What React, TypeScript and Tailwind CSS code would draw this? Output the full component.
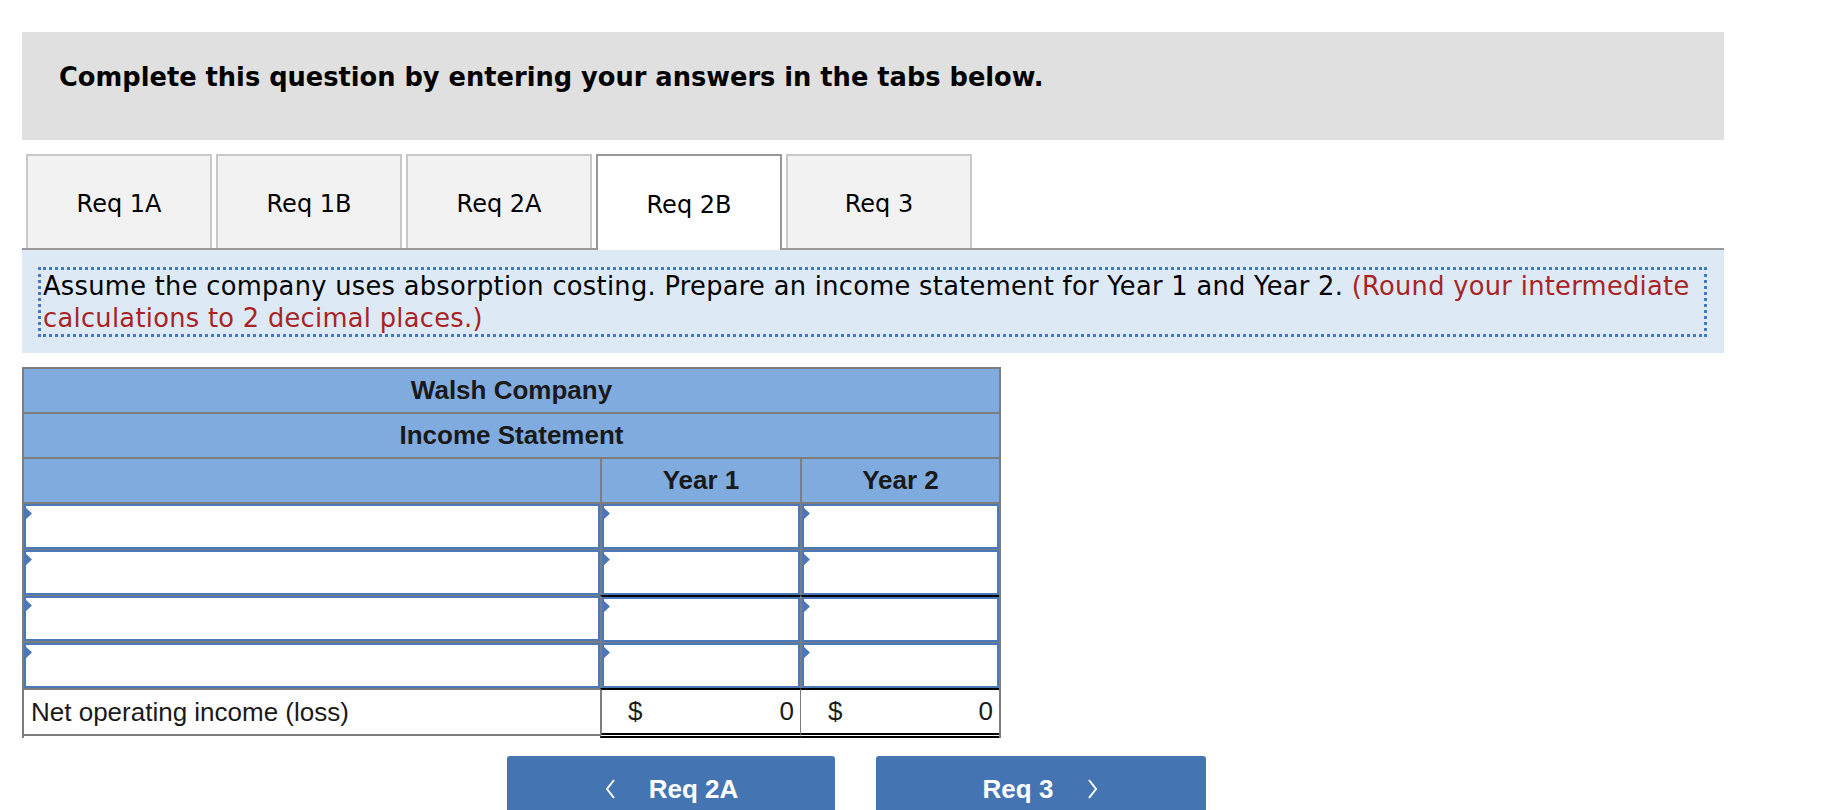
import React from "react"

const tabs = ["Req 1A", "Req 1B", "Req 2A", "Req 2B", "Req 3"]

function Marker() {
    return (
        <svg className="absolute -left-[2px] top-0" width="8" height="15" viewBox="0 0 8 15">
            <polygon points="0,0 8,7.5 0,15" fill="#4a78b8" />
        </svg>
    )
}

function InputCell({ topBlack, first, divider }: { topBlack?: boolean; first?: boolean; divider?: boolean }) {
    return (
        <div
            className={[
                divider ? "border-l-2 border-l-[#7d7d7d]" : "",
                first ? "" : topBlack ? "border-t-2 border-t-black" : "border-t border-t-[#7d7d7d]",
            ].join(" ")}
        >
            <div className="relative h-[45px] border-2 border-[#4a78b8] bg-white">
                <Marker />
            </div>
        </div>
    )
}

function ChevronLeft() {
    return (
        <svg width="12" height="22" viewBox="0 0 12 22" fill="none">
            <path d="M10 2 L3 11 L10 20" stroke="white" strokeWidth="2" />
        </svg>
    )
}

function ChevronRight() {
    return (
        <svg width="12" height="22" viewBox="0 0 12 22" fill="none">
            <path d="M2 2 L9 11 L2 20" stroke="white" strokeWidth="2" />
        </svg>
    )
}

export default function App() {
    const rows = [0, 1, 2, 3]
    return (
        <div className="min-h-[810px] bg-white pt-[32px]">
            <div className="ml-[22px] w-[1702px]">
                {/* heading */}
                <div className="h-[108px] bg-[#e0e0e0] pl-[37px] pt-[31px]">
                    <h2 className="font-['DejaVu_Sans',Verdana,sans-serif] text-[25.7px] font-bold leading-[28px] text-black">
                        Complete this question by entering your answers in the tabs below.
                    </h2>
                </div>

                {/* tabs */}
                <div className="mt-[14px] flex gap-[4px] border-b-2 border-[#999] pl-[4px] font-['DejaVu_Sans',Verdana,sans-serif] text-[24px] text-black">
                    {tabs.map(t => {
                        const active = t === "Req 2B"
                        return (
                            <div
                                key={t}
                                className={
                                    active
                                        ? "-mb-[2px] flex h-[96px] w-[186px] items-center justify-center border-2 border-b-0 border-[#999] bg-white"
                                        : "flex h-[94px] w-[186px] items-center justify-center border-2 border-b-0 border-[#c8c8c8] bg-[#f2f2f2]"
                                }
                            >
                                <span className="pt-[4px]">{t}</span>
                            </div>
                        )
                    })}
                </div>

                {/* instructions */}
                <div className="bg-[#dee9f6] pb-[16px] pl-[16px] pr-[17px] pt-[17px]">
                    <p className="border-[3px] border-dotted border-[#4677c2] pl-[2px] font-['DejaVu_Sans',Verdana,sans-serif] text-[25.7px] leading-[32px] tracking-[0.3px] text-black">
                        Assume the company uses absorption costing. Prepare an income statement for Year 1 and Year 2.{" "}
                        <span className="text-[#a82424]">(Round your intermediate calculations to 2 decimal places.)</span>
                    </p>
                </div>

                {/* statement table */}
                <div className="mt-[14px] w-[979px] border-2 border-b-0 border-[#7d7d7d] font-['Liberation_Sans',Arial,sans-serif] text-[26px] text-[#1a1a1a]">
                    <div className="flex h-[45px] items-center justify-center border-b-2 border-[#7d7d7d] bg-[#80abdf] font-bold">
                        Walsh Company
                    </div>
                    <div className="flex h-[45px] items-center justify-center border-b-2 border-[#7d7d7d] bg-[#80abdf] font-bold">
                        Income Statement
                    </div>
                    <div className="grid h-[45px] grid-cols-[576px_200px_199px] border-b-2 border-[#7d7d7d] bg-[#80abdf] font-bold">
                        <div />
                        <div className="flex items-center justify-center border-l-2 border-[#7d7d7d]">Year 1</div>
                        <div className="flex items-center justify-center border-l-2 border-[#7d7d7d]">Year 2</div>
                    </div>

                    {rows.map(r => (
                        <div key={r} className="grid grid-cols-[576px_200px_199px] bg-[#7d7d7d]">
                            <InputCell first={r === 0} />
                            <InputCell first={r === 0} topBlack={r === 2} divider />
                            <InputCell first={r === 0} topBlack={r === 2} divider />
                        </div>
                    ))}

                    <div className="grid grid-cols-[576px_200px_199px] border-t-2 border-[#7d7d7d]">
                        <div className="flex h-[46px] items-center border-b-2 border-[#7d7d7d] pl-[7px]">
                            Net operating income (loss)
                        </div>
                        <div className="-mt-[2px] flex h-[50px] items-center justify-between border-l-2 border-t-2 border-b-[5px] border-l-[#7d7d7d] border-t-black border-b-black border-double pl-[26px] pr-[6px]">
                            <span>$</span>
                            <span>0</span>
                        </div>
                        <div className="-mt-[2px] flex h-[50px] items-center justify-between border-l border-t-2 border-b-[5px] border-l-[#7d7d7d] border-t-black border-b-black border-double pl-[27px] pr-[6px]">
                            <span>$</span>
                            <span>0</span>
                        </div>
                    </div>
                </div>

                {/* nav buttons */}
                <div className="mt-[18px] flex gap-[41px] pl-[485px] font-['Liberation_Sans',Arial,sans-serif] text-[26px] font-bold text-white">
                    <button className="flex h-[66px] w-[328px] items-center justify-center gap-[33px] rounded-[3px] bg-[#4574b3]">
                        <ChevronLeft />
                        <span>Req 2A</span>
                    </button>
                    <button className="flex h-[66px] w-[330px] items-center justify-center gap-[34px] rounded-[3px] bg-[#4574b3]">
                        <span>Req 3</span>
                        <ChevronRight />
                    </button>
                </div>
            </div>
        </div>
    )
}
